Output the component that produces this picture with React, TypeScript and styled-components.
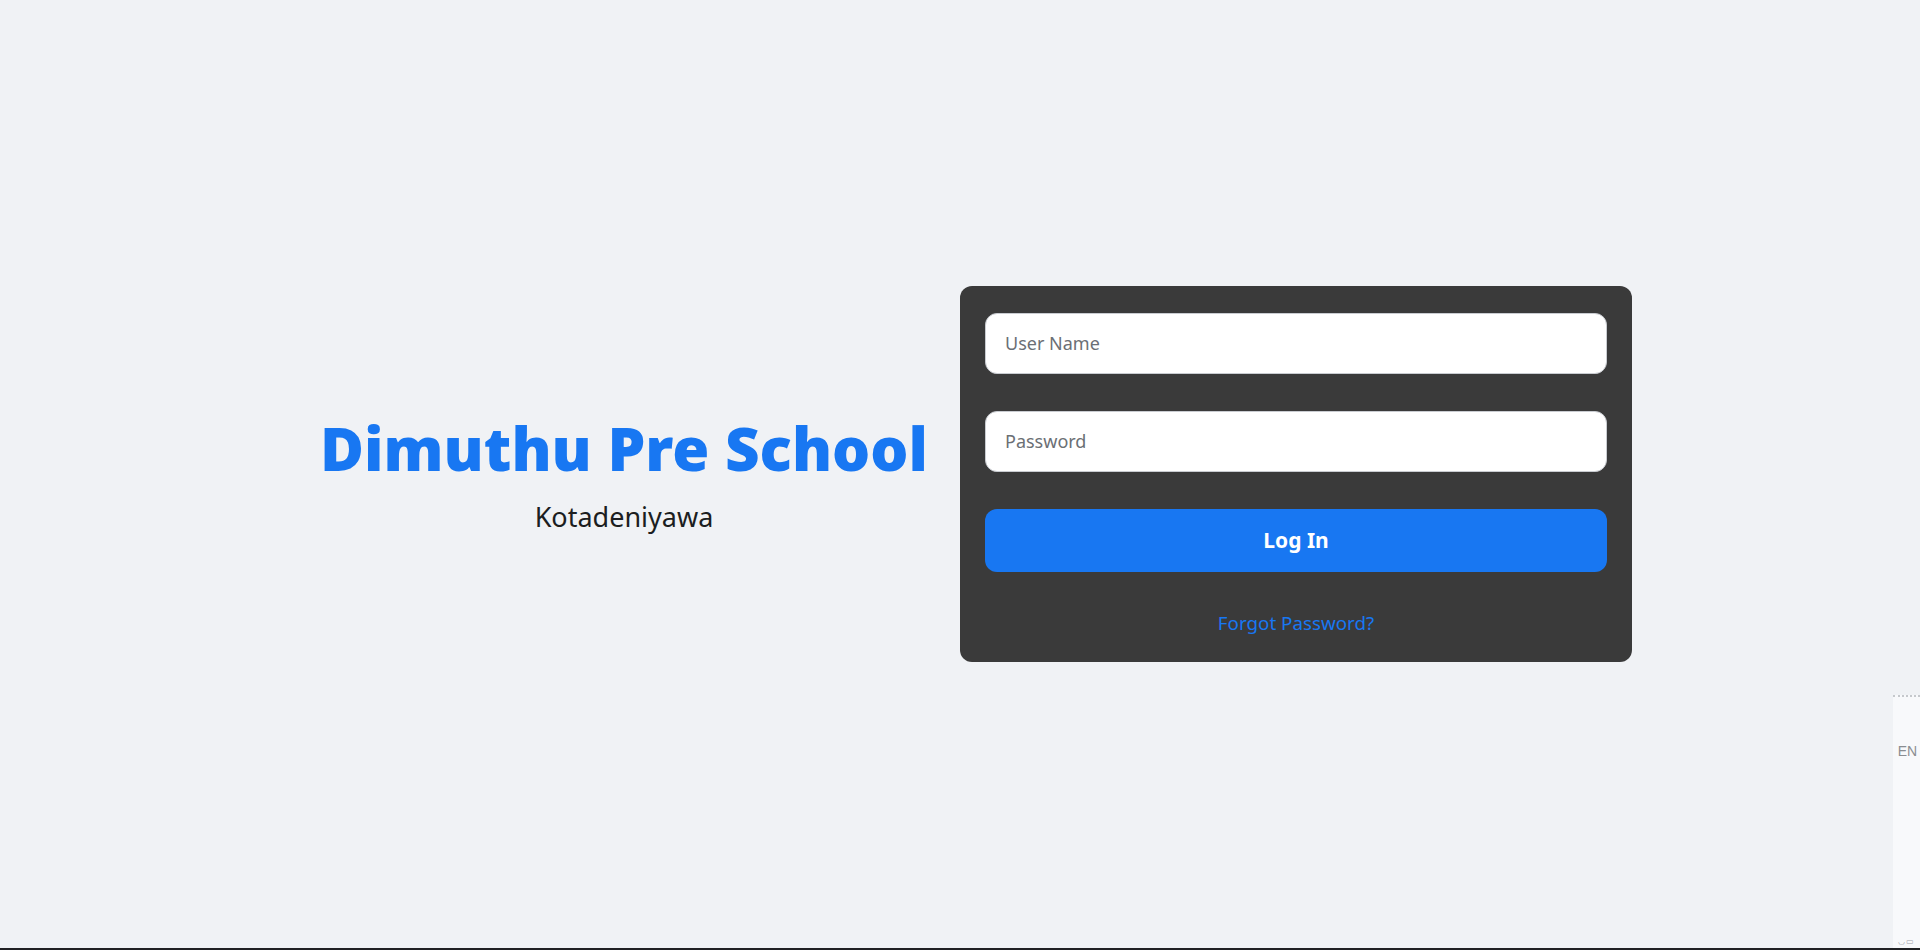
import React, { useState } from "react";
import styled, { createGlobalStyle } from "styled-components";

const GlobalStyle = createGlobalStyle`
  * {
    box-sizing: border-box;
  }
  body {
    margin: 0;
    background-color: #f0f2f5;
    font-family: "Noto Sans", "Open Sans", sans-serif;
  }
`;

const Page = styled.main`
  display: flex;
  justify-content: center;
  align-items: center;
  gap: 6px;
  min-height: 100vh;
  padding: 0 0 2px 6px;
`;

const Brand = styled.section`
  display: flex;
  flex-direction: column;
  align-items: center;
  width: 660px;
  margin-top: -1px;
`;

const Title = styled.h1`
  margin: 0;
  font-size: 60px;
  font-weight: 900;
  line-height: 1.2;
  color: #1877f2;
`;

const Town = styled.p`
  margin: 14px 0 0;
  font-size: 27px;
  color: #1c1e21;
`;

const Card = styled.form`
  display: flex;
  flex-direction: column;
  width: 672px;
  padding: 27px 25px 26px;
  border-radius: 12px;
  background-color: #3a3a3a;
`;

const Field = styled.input`
  height: 61px;
  margin-bottom: 37px;
  padding: 0 19px;
  border: 1px solid #c9ccd1;
  border-radius: 12px;
  background-color: #fff;
  font-family: inherit;
  font-size: 18px;
  color: #1c1e21;
  outline: none;

  &::placeholder {
    color: #6b6f75;
  }
  &:focus {
    border-color: #1877f2;
  }
`;

const Submit = styled.button`
  height: 63px;
  border: none;
  border-radius: 12px;
  background-color: #1877f2;
  color: #fff;
  font-family: inherit;
  font-size: 21px;
  font-weight: 700;
  cursor: pointer;

  &:hover {
    background-color: #166fe5;
  }
`;

const Forgot = styled.a`
  align-self: center;
  margin-top: 38px;
  font-size: 18.8px;
  line-height: 1.4;
  color: #1877f2;
  text-decoration: none;
  cursor: pointer;

  &:hover {
    text-decoration: underline;
  }
`;

const LangTab = styled.aside`
  position: fixed;
  right: 0;
  bottom: 2px;
  display: flex;
  flex-direction: column;
  align-items: center;
  justify-content: space-between;
  width: 27px;
  height: 253px;
  padding: 4px 0 2px;
  border-top: 2px dotted #c5c8cc;
  background-color: #f8f9fb;
  font-family: "Liberation Sans", sans-serif;
  font-size: 14px;
  color: #8a8d91;
`;

const LangCode = styled.span`
  margin-top: 42px;
  margin-left: 2px;
  flex: 1;
`;

const TabIcons = styled.span`
  font-size: 8px;
  letter-spacing: 1px;
  color: #9aa0a8;
`;

const BottomEdge = styled.div`
  position: fixed;
  left: 0;
  right: 0;
  bottom: 0;
  height: 2px;
  background-color: #202124;
`;

const App: React.FC = () => {
  const [userName, setUserName] = useState("");
  const [password, setPassword] = useState("");

  return (
    <>
      <GlobalStyle />
      <Page>
        <Brand>
          <Title>Dimuthu Pre School</Title>
          <Town>Kotadeniyawa</Town>
        </Brand>
        <Card onSubmit={(e) => e.preventDefault()}>
          <Field
            type="text"
            placeholder="User Name"
            value={userName}
            onChange={(e) => setUserName(e.target.value)}
          />
          <Field
            type="password"
            placeholder="Password"
            value={password}
            onChange={(e) => setPassword(e.target.value)}
          />
          <Submit type="submit">Log In</Submit>
          <Forgot>Forgot Password?</Forgot>
        </Card>
      </Page>
      <LangTab>
        <LangCode>EN</LangCode>
        <TabIcons>◡▭</TabIcons>
      </LangTab>
      <BottomEdge />
    </>
  );
};

export default App;
